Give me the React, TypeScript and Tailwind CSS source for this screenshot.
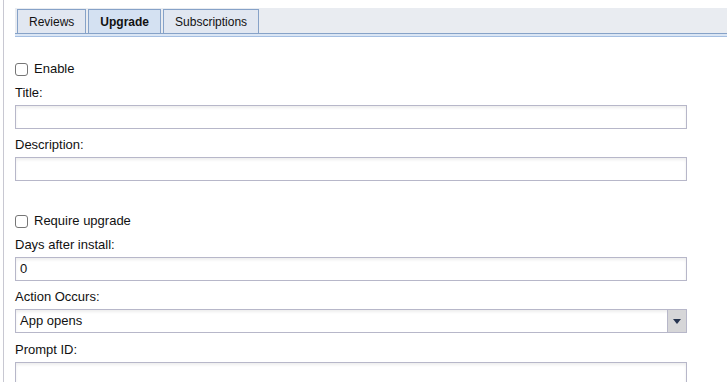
import React from "react";

const Field = ({ label, value = "" }: { label: string; value?: string }) => (
  <div>
    <div className="mt-[8px] mb-[5px] h-[15px] leading-[15px]">{label}</div>
    <div className="flex items-center w-[672px] h-[24px] border border-[#b7b7c9] bg-white px-[4px] shadow-[inset_0_2px_3px_rgba(0,0,0,0.07)]">
      {value}
    </div>
  </div>
);

const Check = ({ label, className }: { label: string; className: string }) => (
  <label className={`flex items-center h-[16px] ${className}`}>
    <span className="w-[13px] h-[13px] rounded-[3px] border border-[#767676] bg-white" />
    <span className="ml-[6px] leading-[16px]">{label}</span>
  </label>
);

const App = () => {
  return (
    <div
      className="w-[727px] h-[382px] overflow-hidden bg-white pl-[3px] text-[13px] text-[#111]"
      style={{ fontFamily: '"Liberation Sans", Arial, sans-serif' }}
    >
      <div className="h-full border-l border-[#c8c8d2] pl-[11px]">
        {/* tab strip */}
        <div className="pt-[8px]">
          <div className="flex h-[25px] bg-[#e9ecf1] pt-[1px] pl-[2px] gap-[2px] text-[12px]">
            <div className="flex items-center px-[11px] border border-b-0 border-[#86a2c8] bg-[#e1e7f1]">Reviews</div>
            <div className="flex items-center px-[11px] border border-b-0 border-[#86a2c8] bg-[#d4e1f2] font-bold">Upgrade</div>
            <div className="flex items-center px-[11px] border border-b-0 border-[#86a2c8] bg-[#e1e7f1]">Subscriptions</div>
          </div>
          <div className="h-[4px] border-t border-b border-t-[#86a2c8] border-b-[#a5bfe2] bg-[#dbe6f4]" />
        </div>

        <Check label="Enable" className="mt-[24px]" />
        <Field label="Title:" />
        <Field label="Description:" />

        <Check label="Require upgrade" className="mt-[32px]" />
        <Field label="Days after install:" value="0" />

        <div>
          <div className="mt-[8px] mb-[5px] h-[15px] leading-[15px]">Action Occurs:</div>
          <div className="flex w-[672px] h-[24px] border border-[#b7b7c9] bg-white shadow-[inset_0_2px_3px_rgba(0,0,0,0.07)]">
            <div className="flex-1 flex items-center px-[4px]">App opens</div>
            <div className="w-[19px] flex items-center justify-center border-l border-[#b7b7c9] bg-[#d6d6d8]">
              <svg width="8" height="5" viewBox="0 0 8 5">
                <path d="M0 0h8L4 5z" fill="#263450" />
              </svg>
            </div>
          </div>
        </div>

        <div>
          <div className="mt-[9px] mb-[5px] h-[15px] leading-[15px]">Prompt ID:</div>
          <div className="w-[672px] h-[24px] border border-[#b7b7c9] bg-white shadow-[inset_0_2px_3px_rgba(0,0,0,0.07)]" />
        </div>
      </div>
    </div>
  );
};

export default App;
